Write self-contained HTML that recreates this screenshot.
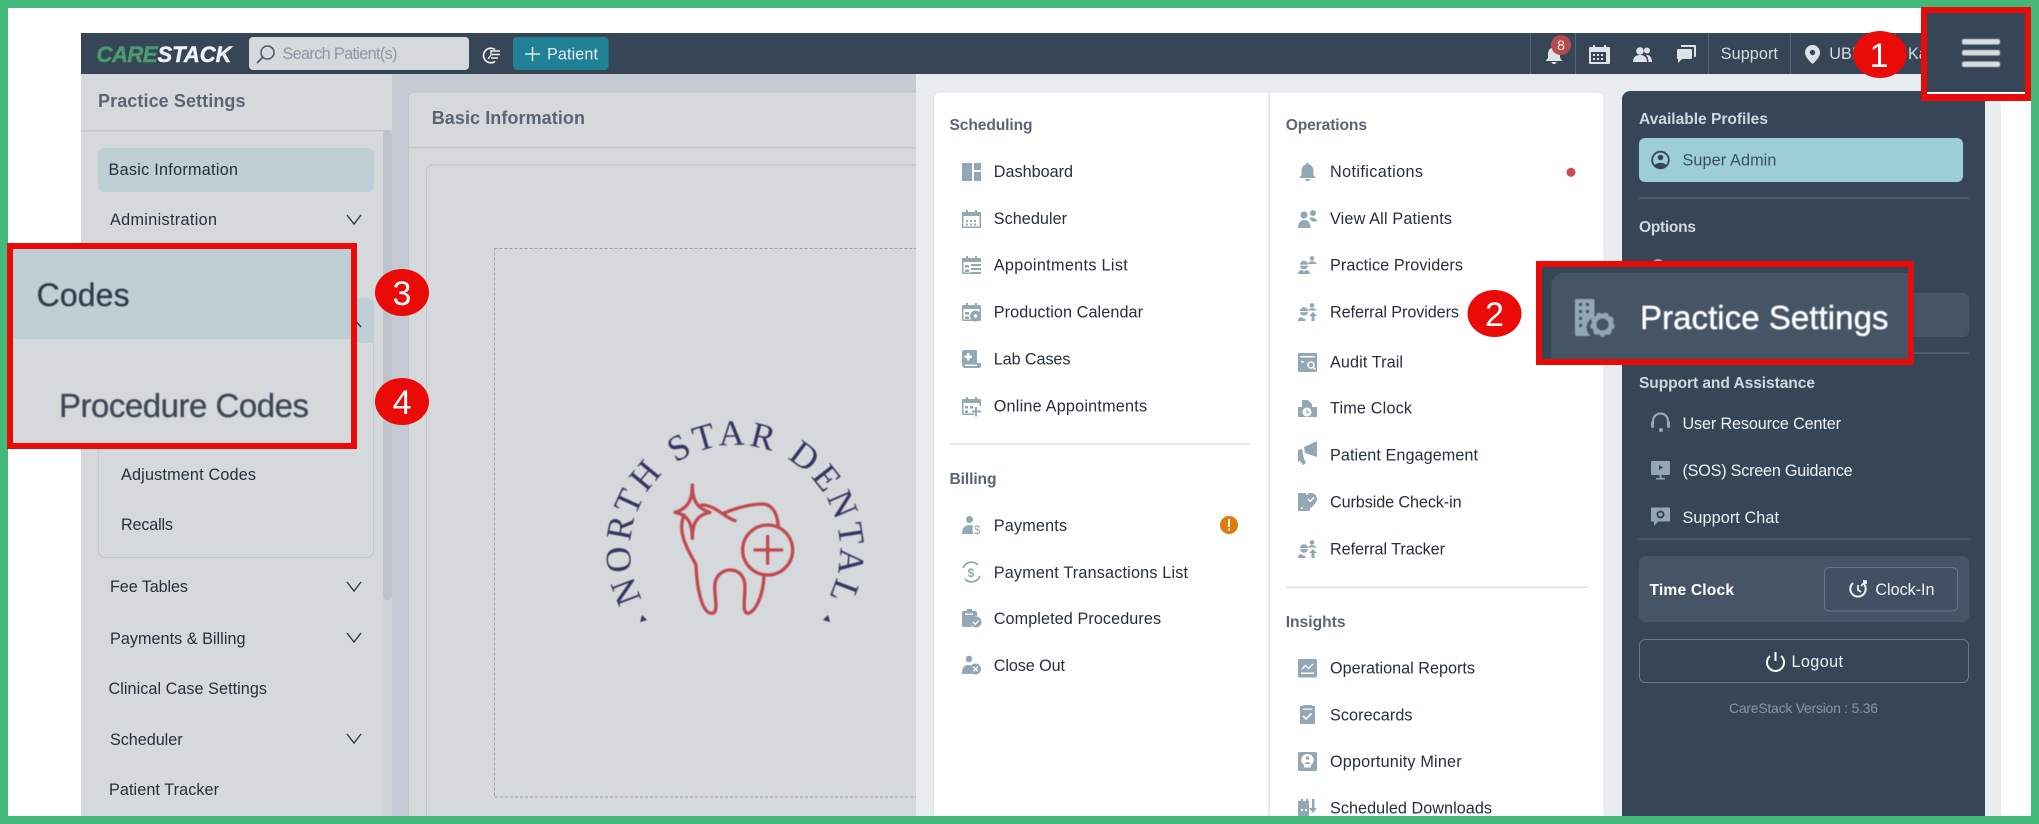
<!DOCTYPE html>
<html><head><meta charset="utf-8"><style>
html,body{margin:0;padding:0;background:#fff;width:2039px;height:824px;overflow:hidden}
svg{display:block}
text{font-family:"Liberation Sans",sans-serif;font-size:16.2px;fill:#25303c}
.h{font-weight:bold;fill:#5a6675;font-size:15.6px}
.w{fill:#edf1f4}
.l{font-weight:bold;fill:#cfd8df;font-size:15.6px}
.i{fill:#94a7b4}
.b{filter:blur(.6px)}
.d{font-size:34px;fill:#fff;text-anchor:middle}
</style></head><body>
<svg width="2039" height="824" viewBox="0 0 2039 824" xmlns="http://www.w3.org/2000/svg">
<defs>
<symbol id="cal" viewBox="0 0 19 18" width="19" height="18"><path class="i" d="M1 2h3V0h2v2h7V0h2v2h3a1 1 0 0 1 1 1v14a1 1 0 0 1-1 1H1a1 1 0 0 1-1-1V3a1 1 0 0 1 1-1z"/><rect x="1.5" y="6" width="16" height="10.5" fill="#fff"/></symbol>
<symbol id="bell" viewBox="0 0 16 18" width="16" height="18"><path d="M8 0c1 0 1.7.7 1.7 1.5C12.5 2.3 14 5 14 8v4l2 2.500V15H0v-.5L2 12V8c0-3 1.500-5.700 4.300-6.500C6.300.7 7 0 8 0zM5.500 16h5c0 1.200-1.200 2-2.500 2s-2.500-.8-2.500-2z"/></symbol>
<symbol id="pr" viewBox="0 0 19 18" width="19" height="18"><g class="i"><circle cx="14" cy="2.400" r="2.300"/><path d="M10 8c.6-1.800 2.300-2.700 4-2.700s3.700.9 5 2.700z"/><circle cx="6" cy="9" r="4.200"/><path d="M0 18c0-2 1.500-3.500 3.500-4l2.500 1.500 2.500-1.500c2 .5 3.500 2 3.500 4z"/></g><rect x="1.500" y="8.600" width="9" height="1.100" fill="#fff"/></symbol>
<symbol id="rf" viewBox="0 0 19 18" width="19" height="18"><g class="i"><circle cx="14" cy="2.400" r="2.300"/><path d="M10 7.500c.6-1.600 2.300-2.400 4-2.400s3.700.8 5 2.400z"/><circle cx="6" cy="8.500" r="4.200"/><path d="M0 18c0-2 1-3.500 3-4 1 1 2.500 1.500 5 2.500l-1 1.500zM15 9l4 4h-2.500v5h-3v-5H11z"/></g><rect x="1.500" y="8.100" width="9" height="1.100" fill="#fff"/></symbol>
</defs>

<rect width="2039" height="824" fill="#fff"/>

<!-- base layers -->
<rect x="81" y="74" width="835" height="750" fill="#c6cad2"/>
<rect x="81" y="74" width="311" height="750" fill="#d5d9dc"/>
<rect x="81" y="130" width="311" height="1.500" fill="#c3c8d0"/>
<rect x="383" y="131" width="9" height="700" fill="#d0d4d8"/>
<rect x="383" y="131" width="9" height="469" rx="3" fill="#bfc4cc"/>

<text class="h" x="98" y="107" style="font-size:18px" textLength="147.500">Practice Settings</text>
<rect x="98" y="148" width="276" height="44" rx="6" fill="#c0cfd6"/>
<text x="108.500" y="175" textLength="129.500">Basic Information</text>
<text x="110" y="225" textLength="107">Administration</text>
<polyline points="347,215 354,224 361,215" fill="none" stroke="#2d3744" stroke-width="1.400"/>
<rect x="98.500" y="298.500" width="275" height="259" rx="6" fill="#d5d9dc" stroke="#c0cbd4"/>
<path d="M98 343V304a6 6 0 0 1 6-6h264a6 6 0 0 1 6 6v39z" fill="#c0cfd6"/>
<polyline points="347,327 354,319 361,327" fill="none" stroke="#2d3744" stroke-width="1.400"/>
<text x="121" y="480" textLength="135">Adjustment Codes</text>
<text x="121" y="530" textLength="52">Recalls</text>
<text x="110" y="592" textLength="78">Fee Tables</text>
<polyline points="347,582 354,591 361,582" fill="none" stroke="#2d3744" stroke-width="1.400"/>
<text x="110" y="644" textLength="135.500">Payments &amp; Billing</text>
<polyline points="347,633 354,642 361,633" fill="none" stroke="#2d3744" stroke-width="1.400"/>
<text x="108.500" y="694" textLength="158.500">Clinical Case Settings</text>
<text x="110" y="745" textLength="72.600">Scheduler</text>
<polyline points="347,734 354,743 361,734" fill="none" stroke="#2d3744" stroke-width="1.400"/>
<text x="109" y="795" textLength="110">Patient Tracker</text>

<!-- content card -->
<path d="M408.500 824V98a6 6 0 0 1 6-6H920V824z" fill="#d5d9dc" stroke="#bfc4cc"/>
<rect x="409" y="147" width="510" height="1.500" fill="#bfc4cc"/>
<path d="M426.500 824V171a6 6 0 0 1 6-6H920" fill="none" stroke="#bfc4cc"/>
<rect x="494.500" y="248.500" width="500" height="548.500" fill="none" stroke="#98a0aa" stroke-dasharray="3 2"/>
<text class="h" x="431.700" y="124" style="font-size:18px" textLength="153.300">Basic Information</text>

<!-- logo -->
<g style="filter:blur(.4px)">
<path id="arc" d="M642.300 599.300A105 105 0 1 1 827.700 599.300" fill="none"/>
<text style="font-family:'Liberation Serif',serif;font-size:36px;fill:#34345f"><textPath href="#arc" textLength="430" startOffset="0">NORTH STAR DENTAL</textPath></text>
<path d="M640 622l7-2-5-5zM830 622l-7-2 5-5z" fill="#34345f"/>
<g transform="translate(560 400) scale(.3333)" fill="none" stroke="#c04a50" stroke-width="10" stroke-linecap="round" stroke-linejoin="round">
<path d="M397 255C397 300 385 325 345 337C385 345 397 370 397 415C397 370 410 345 450 337C410 325 397 300 397 255z"/>
<path d="M525 362C490 350 465 315 425 315M372 345C350 400 385 450 408 495C410 560 425 640 455 640C480 640 460 580 465 550C470 520 495 510 510 510C545 510 555 540 555 560C555 600 545 640 565 640C595 630 610 570 612 530M490 340C550 315 590 312 610 312C640 315 652 345 655 378"/>
<circle cx="623" cy="450" r="75"/>
<path d="M585 450H665M623 410V490"/>
</g>
</g>

<!-- right panel -->
<rect x="916" y="74" width="1085" height="750" fill="#e9edf0"/>
<path d="M933.500 824V98a6 6 0 0 1 6-6H1598a6 6 0 0 1 6 6V824z" fill="#fff" stroke="#dfe3e8"/>
<rect x="1268.500" y="92" width="1.500" height="732" fill="#dfe3e8"/>

<text class="h" x="949.500" y="130" textLength="83">Scheduling</text>
<text class="h" x="1285.700" y="130" textLength="81.300">Operations</text>

<text x="993.750" y="177" textLength="79.300">Dashboard</text>
<text x="993.750" y="224" textLength="73.300">Scheduler</text>
<text x="993.750" y="270.500" textLength="134">Appointments List</text>
<text x="993.750" y="317.500" textLength="149.300">Production Calendar</text>
<text x="993.750" y="364.500" textLength="76.700">Lab Cases</text>
<text x="993.750" y="411.500" textLength="153.300">Online Appointments</text>
<rect x="950" y="443.500" width="301" height="1.500" fill="#dfe3e8"/>
<text class="h" x="949.500" y="484" textLength="47">Billing</text>
<text x="993.750" y="531" textLength="73.300">Payments</text>
<text x="993.750" y="578" textLength="194.300">Payment Transactions List</text>
<text x="993.750" y="624" textLength="167.300">Completed Procedures</text>
<text x="993.750" y="671" textLength="71.300">Close Out</text>

<text x="1330" y="177" textLength="93">Notifications</text>
<text x="1330" y="224" textLength="122">View All Patients</text>
<text x="1330" y="270.500" textLength="133">Practice Providers</text>
<text x="1330" y="317.500" textLength="129">Referral Providers</text>
<text x="1330" y="367.500" textLength="73">Audit Trail</text>
<text x="1330" y="413.500" textLength="82">Time Clock</text>
<text x="1330" y="460.500" textLength="148">Patient Engagement</text>
<text x="1330" y="507.500" textLength="131.600">Curbside Check-in</text>
<text x="1330" y="554.500" textLength="115">Referral Tracker</text>
<rect x="1286" y="586.500" width="302" height="1.500" fill="#dfe3e8"/>
<text class="h" x="1285.700" y="627" textLength="59.800">Insights</text>
<text x="1330" y="673.500" textLength="145">Operational Reports</text>
<text x="1330" y="720.500" textLength="82.500">Scorecards</text>
<text x="1330" y="767" textLength="131.600">Opportunity Miner</text>
<text x="1330" y="813.500" textLength="162">Scheduled Downloads</text>

<circle cx="1571" cy="172.300" r="4.500" fill="#d0494f"/>
<circle cx="1229" cy="525" r="9" fill="#e07b0d"/>
<rect x="1228" y="519" width="2" height="8" fill="#fff"/><rect x="1228" y="528.500" width="2" height="2" fill="#fff"/>

<!-- column 1 icons -->
<g class="i"><rect x="962" y="163" width="10" height="18"/><rect x="974" y="163" width="7" height="7"/><rect x="974" y="172" width="7" height="9"/></g>
<use href="#cal" x="962" y="210"/>
<g class="i"><rect x="966" y="220" width="2" height="2"/><rect x="970" y="220" width="2" height="2"/><rect x="974" y="220" width="2" height="2"/><rect x="966" y="223.500" width="2" height="2"/><rect x="970" y="223.500" width="2" height="2"/><rect x="974" y="223.500" width="2" height="2"/></g>
<use href="#cal" x="962" y="256"/>
<rect x="973" y="262" width="9" height="13" fill="#fff"/>
<g class="i"><rect x="965" y="265" width="4" height="2.500"/><rect x="965" y="269.500" width="4" height="2.500"/><rect x="971" y="264" width="10" height="2"/><rect x="971" y="268" width="10" height="2"/><rect x="971" y="272" width="10" height="2"/></g>
<use href="#cal" x="962" y="303"/>
<g class="i"><rect x="965" y="312" width="4" height="2.500"/><rect x="965" y="316.500" width="4" height="2.500"/><circle cx="975.500" cy="316" r="5.500"/></g><circle cx="975.500" cy="316" r="1.700" fill="#fff"/>
<g class="i"><path d="M964 350h10a1 1 0 0 1 1 1v11H964a2 2 0 0 0-2 2V352a2 2 0 0 1 2-2z"/><path d="M962 364a2 2 0 0 1 2-2h11v-12h1a1 1 0 0 1 1 1v12h4v3a2 2 0 0 1-2 2H965a3 3 0 0 1-3-3z"/></g><path d="M967 353h2.500v2.500H972v2.500h-2.500v2.500H967v-2.500h-2.500v-2.500H967z" fill="#fff"/><rect x="965" y="364.500" width="12" height="1.500" fill="#fff"/>
<use href="#cal" x="962" y="397"/>
<rect x="974" y="406" width="8" height="10" fill="#fff"/>
<g class="i"><rect x="965" y="406" width="3" height="2.500"/><rect x="970" y="406" width="3" height="2.500"/><rect x="965" y="410.500" width="3" height="2.500"/><path d="M975 407h2v3.500h4v2h-4v4h-2v-4h-3v-2h3z"/></g>
<g class="i"><circle cx="969.500" cy="519.500" r="3.500"/><path d="M962 534c0-6 3-9 7.500-9 1.500 0 2.500.3 3.500 1-.8 2-.5 6 .5 8z"/></g><text x="974" y="534" style="font-size:11.500px;fill:#94a7b4">$</text>
<g fill="none" stroke="#94a7b4" stroke-width="1.800"><path d="M963 568a9 9 0 0 1 15-3M980 576a9 9 0 0 1-15 3"/></g><text x="967.500" y="577" style="font-size:12px;font-weight:bold;fill:#94a7b4">$</text>
<g class="i"><path d="M964 611h3v-2h5v2h3a2 2 0 0 1 2 2v3a7 7 0 0 0-5 11h-8a2 2 0 0 1-2-2V613a2 2 0 0 1 2-2z"/><circle cx="976" cy="622" r="5.500"/></g><path d="M973 622l2.200 2.200 3.800-3.800" fill="none" stroke="#fff" stroke-width="1.300"/><rect x="965" y="613.500" width="8" height="1.500" fill="#fff"/>
<g class="i"><circle cx="969" cy="659" r="3.300"/><path d="M962 674c0-6 2-9 6-9 2 0 3 .5 4 1-1 2-1 6 0 8z"/><circle cx="975.500" cy="669" r="5.500"/></g><path d="M973.300 666.800l4.400 4.400M977.700 666.800l-4.400 4.400" stroke="#fff" stroke-width="1.300"/>

<!-- column 2 icons -->
<use href="#bell" x="1299.500" y="163" class="i"/>
<g class="i"><circle cx="1304" cy="215" r="3.600"/><circle cx="1313" cy="213" r="3"/><path d="M1298 228c0-5 2.500-8 6.500-8s6 3 6 8zM1309 218c1.500-.5 6-1.200 8 2.500v1h-5c-1-1-2-2.500-3-3.500z"/></g>
<use href="#pr" x="1298" y="256"/>
<use href="#rf" x="1298" y="303"/>
<g class="i"><rect x="1298" y="353" width="19" height="19" rx="1.500"/></g><g fill="#fff"><rect x="1300" y="356" width="15" height="1.500"/><rect x="1301" y="361" width="3" height="1.500"/></g><circle cx="1311" cy="365" r="3" fill="none" stroke="#fff" stroke-width="1.500"/><path d="M1313 367l2.500 2.500" stroke="#fff" stroke-width="1.500"/>
<g class="i"><path d="M1302 400h6l4 4v3h5v9a1 1 0 0 1-1 1H1299a1 1 0 0 1-1-1v-9h4z"/></g><circle cx="1307" cy="412" r="4.500" fill="#fff"/><path d="M1307 409.500v3h2" stroke="#94a7b4" fill="none" stroke-width="1.200"/>
<path class="i" d="M1298 450l4-1 2 10 2 4-3 2-3-4-2 1zM1304 447l13-6v16l-12-4z"/>
<path class="i" d="M1299 493h7a9 9 0 0 0 1 5l3 4v8a1 1 0 0 1-1 1H1299a1 1 0 0 1-1-1V494a1 1 0 0 1 1-1z"/><path class="i" d="M1311 493a6 6 0 0 1 6 6c0 3-3 6-6 9-3-3-6-6-6-9a6 6 0 0 1 6-6z"/><path d="M1308 499l2.200 2.300 3.800-4" fill="none" stroke="#fff" stroke-width="1.400"/><circle cx="1302" cy="508" r="1" fill="#fff"/>
<use href="#rf" x="1298" y="540"/>
<rect class="i" x="1298" y="659" width="19" height="18.500" rx="1.500"/><path d="M1302 669l3.500-3.500 3 3 4.500-4.500" fill="none" stroke="#fff" stroke-width="1.500"/><rect x="1301" y="672.500" width="13" height="1.500" fill="#fff"/>
<path class="i" d="M1300 706h3v-1h9v1h3v17a1 1 0 0 1-1 1H1301a1 1 0 0 1-1-1z"/><rect x="1303" y="708.500" width="9" height="1.200" fill="#fff"/><path d="M1303 716l3 3 5.500-5.500" fill="none" stroke="#fff" stroke-width="1.600"/>
<rect class="i" x="1298" y="752" width="19" height="19" rx="1.500"/><path d="M1307.500 754a6 6 0 0 1 3.500 11v2.500h-7V765a6 6 0 0 1 3.500-11z" fill="#fff"/><circle cx="1307.500" cy="758" r="1.800" class="i"/><path class="i" d="M1304.500 764c.5-2.500 5.500-2.500 6 0z"/>
<path class="i" d="M1299 801h2v-2h2v2h3v-2h2v2h1v15h-10a1 1 0 0 1-1-1v-13a1 1 0 0 1 1-1z"/><path d="M1312 799h2.500v9h2.500l-4 5-4-5h3z" class="i"/><g fill="#fff"><rect x="1301" y="809" width="2" height="2"/><rect x="1305" y="809" width="2" height="2"/></g>

<!-- dark panel -->
<path d="M1622 824V99a8 8 0 0 1 8-8h347a8 8 0 0 1 8 8v725z" fill="#364657"/>
<text class="l" x="1639" y="124" textLength="129">Available Profiles</text>
<rect x="1639" y="138" width="324" height="44" rx="6" fill="#9dced5"/>
<circle cx="1660.500" cy="160" r="8.300" fill="none" stroke="#36465a" stroke-width="1.800"/><circle cx="1660.500" cy="157.500" r="2.800" fill="#36465a"/><path d="M1654.500 165.500c1.500-3.500 10.500-3.500 12 0a8 8 0 0 1-12 0z" fill="#36465a"/>
<text x="1682.500" y="165.500" style="fill:#3d4d60" textLength="93.900">Super Admin</text>
<rect x="1639" y="197.500" width="330" height="1.200" fill="#56687a"/>
<text class="l" x="1639" y="232" textLength="57">Options</text>
<circle cx="1658" cy="265" r="6" fill="#94a7b4"/>
<rect x="1639" y="293" width="330" height="44" rx="6" fill="#455566"/>
<rect x="1639" y="352.500" width="330" height="1.200" fill="#56687a"/>
<text class="l" x="1639" y="388" textLength="176">Support and Assistance</text>
<text class="w" x="1682.500" y="429" textLength="158.500">User Resource Center</text>
<text class="w" x="1682.500" y="476" textLength="170.200">(SOS) Screen Guidance</text>
<text class="w" x="1682.500" y="523" textLength="96.500">Support Chat</text>
<rect x="1639" y="538.500" width="330" height="1.200" fill="#56687a"/>
<!-- panel icons -->
<path d="M1653 424v-3a7.500 7.500 0 0 1 15 0v3" fill="none" stroke="#94a7b4" stroke-width="2.200"/><rect x="1651" y="421" width="3" height="7" rx="1.500" fill="#94a7b4"/><rect x="1667" y="421" width="3" height="7" rx="1.500" fill="#94a7b4"/><circle cx="1661" cy="430" r="2" fill="#94a7b4"/>
<rect class="i" x="1651" y="461" width="19" height="14" rx="1"/><rect class="i" x="1659.500" y="475" width="2" height="3"/><rect class="i" x="1656" y="478" width="9" height="1.500"/><path d="M1659 465l4 2.500-4 2.500z" fill="#36465a"/>
<path class="i" d="M1652 507.500h17a1 1 0 0 1 1 1v12a1 1 0 0 1-1 1h-11l-4 4.500v-4.500h-2a1 1 0 0 1-1-1v-12a1 1 0 0 1 1-1z"/><circle cx="1660.500" cy="514.500" r="3" fill="none" stroke="#36465a" stroke-width="2"/>
<!-- time clock -->
<rect x="1639" y="556" width="330" height="66" rx="6" fill="#455566"/>
<text x="1649.500" y="595" style="font-weight:bold;fill:#fff;font-size:15.600px" textLength="84.500">Time Clock</text>
<rect x="1824.500" y="567.500" width="133" height="43.500" rx="5" fill="#415163" stroke="#66778a"/>
<path d="M1853 583a7.700 7.700 0 1 0 10 0" fill="none" stroke="#f0f3f5" stroke-width="2"/><path d="M1858 585v5l3 2M1861 586l5-5M1863 581h3v3" fill="none" stroke="#f0f3f5" stroke-width="1.700"/>
<text class="w" x="1875.400" y="595" textLength="59.100">Clock-In</text>
<rect x="1639.500" y="639.500" width="329" height="43" rx="6" fill="none" stroke="#6a7a8c"/>
<path d="M1770 656a8.500 8.500 0 1 0 11 0M1775.500 652v9" fill="none" stroke="#fff" stroke-width="2"/>
<text class="w" x="1791.500" y="667" textLength="51.500">Logout</text>
<text x="1729" y="713" style="font-size:14px;fill:#8797a6" textLength="149">CareStack Version : 5.36</text>

<!-- header -->
<rect x="81" y="33" width="1920" height="41" fill="#364657"/>
<text x="96.500" y="62" style="font-weight:bold;font-style:italic;font-size:22px;fill:#4a9a6e;stroke:#4a9a6e;stroke-width:.5" textLength="61">CARE</text>
<text x="157.500" y="62" style="font-weight:bold;font-style:italic;font-size:22px;fill:#f1f4f6;stroke:#f1f4f6;stroke-width:.5" textLength="74">STACK</text>
<rect x="249" y="37" width="220" height="33" rx="4" fill="#d5d9dc"/>
<circle cx="267.500" cy="52.500" r="6.500" fill="none" stroke="#445566" stroke-width="1.500"/><path d="M262.500 57.500l-5.500 5.500" stroke="#445566" stroke-width="1.600"/>
<text x="282.500" y="59" style="fill:#8d98a6" textLength="115">Search Patient(s)</text>
<path d="M495 49.500a7.300 7.300 0 1 0 0 12" fill="none" stroke="#eef1f3" stroke-width="1.700"/><path d="M491 50v5l-3 4M491 51h9M492 54.500h8M491 58h7" fill="none" stroke="#eef1f3" stroke-width="1.400"/>
<rect x="513" y="37" width="95.600" height="33" rx="4" fill="#208094"/>
<path d="M532.500 47v14M525 54h15" stroke="#dfe9ec" stroke-width="1.500"/>
<text x="547" y="59.500" style="fill:#e4ecef" textLength="51">Patient</text>

<g fill="#55667a"><rect x="1530" y="33" width="1" height="41"/><rect x="1575" y="33" width="1" height="41"/><rect x="1708" y="33" width="1" height="41"/><rect x="1790" y="33" width="1" height="41"/><rect x="1895" y="33" width="1" height="41"/></g>
<use href="#bell" x="1546" y="46" fill="#dde3e8"/>
<circle cx="1561" cy="45" r="10" fill="#b84a4f"/>
<text x="1561" y="50" style="fill:#f4e6e6;font-size:14px;text-anchor:middle">8</text>
<path d="M1590 47h3v-2h2v2h9v-2h2v2h3a1 1 0 0 1 1 1v15a1 1 0 0 1-1 1H1590a1 1 0 0 1-1-1V48a1 1 0 0 1 1-1z" fill="#dde3e8"/>
<rect x="1591" y="52" width="15" height="10" fill="#364657"/>
<g fill="#dde3e8"><rect x="1593" y="54" width="2" height="2"/><rect x="1597" y="54" width="2" height="2"/><rect x="1601" y="54" width="2" height="2"/><rect x="1593" y="58" width="2" height="2"/><rect x="1597" y="58" width="2" height="2"/><rect x="1601" y="58" width="2" height="2"/></g>
<g fill="#dde3e8"><circle cx="1640" cy="51" r="3.800"/><circle cx="1647" cy="50.500" r="3"/><path d="M1633 62c0-5 3-7 7-7s7 2 7 7zM1646 55c3-.5 6 2 6 7h-3.500c0-3-1-5.500-2.500-7z"/></g>
<path d="M1681 45h14a1 1 0 0 1 1 1v10a1 1 0 0 1-1 1h-1V48a1 1 0 0 0-1-1h-12z" fill="#dde3e8"/>
<path d="M1678 49h13a1 1 0 0 1 1 1v8a1 1 0 0 1-1 1h-9l-4 4v-4a1 1 0 0 1-1-1v-8a1 1 0 0 1 1-1z" fill="#dde3e8"/>
<text x="1720.700" y="59" style="fill:#d5dde3" textLength="57.300">Support</text>
<path d="M1812.500 45a7.500 7.500 0 0 1 7.500 7.500c0 4-4 8.500-7.500 11.500-3.500-3-7.500-7.500-7.500-11.500a7.500 7.500 0 0 1 7.500-7.500z" fill="#dde3e8"/><circle cx="1812.500" cy="52.500" r="2.700" fill="#364657"/>
<text x="1829.300" y="59" style="fill:#d5dde3">UBI</text>
<text x="1908" y="59" style="fill:#d5dde3">Ka</text>

<!-- green frame -->
<path fill-rule="evenodd" d="M0 0H2039V824H0zM8 8V816H2031V8z" fill="#43ba7a"/>

<!-- callout 1 -->
<rect x="1921" y="7" width="110" height="94" fill="#ea0a08"/>
<rect x="1927" y="13" width="98" height="81" fill="#fff"/>
<rect x="1927" y="13" width="98" height="79" fill="#364657"/>
<g class="b" fill="#d6dde3"><rect x="1962" y="39" width="38" height="5.500" rx="2"/><rect x="1962" y="50" width="38" height="5.500" rx="2"/><rect x="1962" y="61.500" width="38" height="5.500" rx="2"/></g>
<ellipse cx="1880" cy="54.500" rx="27" ry="23.500" fill="#ea0a08"/>
<text class="d" x="1879" y="67">1</text>

<!-- callout 2 -->
<rect x="1536" y="261" width="377.500" height="104" fill="#ea0a08"/>
<rect x="1542" y="267" width="366" height="92" fill="#364657"/>
<path d="M1551.500 359V285a12 12 0 0 1 12-12H1908v86z" fill="#455566"/>
<g class="b">
<path class="i" d="M1577 299h16a1.500 1.500 0 0 1 1.500 1.500V317a11 11 0 0 0-4 19h-14a1.500 1.500 0 0 1-1.500-1.500v-34a1.500 1.500 0 0 1 2-1.500z"/>
<g fill="#455566"><rect x="1579" y="303" width="3" height="3"/><rect x="1586" y="303" width="3" height="3"/><rect x="1579" y="310" width="3" height="3"/><rect x="1586" y="310" width="3" height="3"/><rect x="1579" y="317" width="3" height="3"/><rect x="1579" y="324" width="3" height="3"/></g>
<circle cx="1602.500" cy="324.500" r="8.500" fill="none" stroke="#94a7b4" stroke-width="5"/>
<circle cx="1602.500" cy="324.500" r="11" fill="none" stroke="#94a7b4" stroke-width="2.600" stroke-dasharray="4 3.600"/>
</g>
<text class="b" x="1640" y="329" style="font-size:33px;fill:#fff;stroke:#fff;stroke-width:.4" textLength="248.500">Practice Settings</text>
<ellipse cx="1494.500" cy="313.500" rx="27" ry="23.500" fill="#ea0a08"/>
<text class="d" x="1494.500" y="326">2</text>

<!-- callout 3/4 -->
<rect x="7" y="243" width="350" height="206" fill="#ea0a08"/>
<rect x="13" y="249" width="338" height="194" fill="#d5d9dc"/>
<rect x="13" y="249" width="338" height="90" fill="#c0cfd6"/>
<text class="b" x="36.600" y="306" style="font-size:32px;fill:#2f3a47;stroke:#2f3a47;stroke-width:.3" textLength="93">Codes</text>
<text class="b" x="59" y="417" style="font-size:33px;fill:#3c4754;stroke:#3c4754;stroke-width:.3" textLength="250">Procedure Codes</text>
<ellipse cx="402" cy="292.500" rx="27" ry="23.500" fill="#ea0a08"/>
<text class="d" x="402" y="305">3</text>
<ellipse cx="402" cy="401.500" rx="27" ry="23.500" fill="#ea0a08"/>
<text class="d" x="402" y="414">4</text>
</svg>
</body></html>
